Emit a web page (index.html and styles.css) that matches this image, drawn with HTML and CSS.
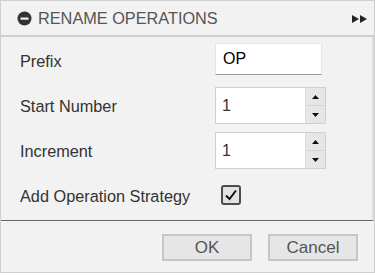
FILE: index.html
```html
<!DOCTYPE html>
<html lang="en">
	<head>
		<meta charset="UTF-8" />
		<meta name="viewport" content="width=device-width, initial-scale=1.0" />
		<title>Rename Operations</title>
		<link rel="stylesheet" href="styles.css">
	</head>
	<body>
		<div class="dialog">
			<div class="titlebar">
				<svg class="collapse" width="15" height="15" viewBox="0 0 15 15">
					<circle cx="7.5" cy="7.5" r="7" fill="#333" />
					<rect x="3.5" y="6.5" width="8" height="2.2" fill="#f2f2f2" />
				</svg>
				<h1>RENAME OPERATIONS</h1>
				<svg class="expand" width="16" height="8" viewBox="0 0 16 8">
					<path d="M0 0 L7 4 L0 8 Z M8 0 L15 4 L8 8 Z" fill="#222" />
				</svg>
			</div>
			<div class="content">
				<div class="row">
					<label>Prefix</label>
					<input class="text" type="text" value="OP">
				</div>
				<div class="row">
					<label>Start Number</label>
					<div class="spinner">
						<input type="text" value="1">
						<div class="arrows">
							<button><svg width="7" height="4" viewBox="0 0 7 4"><path d="M0 4 L3.5 0 L7 4 Z" fill="#111" /></svg></button>
							<button><svg width="7" height="4" viewBox="0 0 7 4"><path d="M0 0 L3.5 4 L7 0 Z" fill="#111" /></svg></button>
						</div>
					</div>
				</div>
				<div class="row">
					<label>Increment</label>
					<div class="spinner">
						<input type="text" value="1">
						<div class="arrows">
							<button><svg width="7" height="4" viewBox="0 0 7 4"><path d="M0 4 L3.5 0 L7 4 Z" fill="#111" /></svg></button>
							<button><svg width="7" height="4" viewBox="0 0 7 4"><path d="M0 0 L3.5 4 L7 0 Z" fill="#111" /></svg></button>
						</div>
					</div>
				</div>
				<div class="row">
					<label>Add Operation Strategy</label>
					<span class="check">
						<svg width="14" height="14" viewBox="0 0 14 14">
							<path d="M2 7.5 L5.5 11 L12 2.5" fill="none" stroke="#111" stroke-width="2" />
						</svg>
					</span>
				</div>
			</div>
			<div class="footer">
				<button>OK</button>
				<button>Cancel</button>
			</div>
		</div>
	</body>
</html>
```

FILE: styles.css
```css
* {
	margin: 0;
	padding: 0;
	box-sizing: border-box;
}
body {
	background-color: #fff;
	font-family: "Liberation Sans", Arial, sans-serif;
	color: #333;
}
.dialog {
	width: 375px;
	height: 273px;
	border: 1px solid #cfcfcf;
	background-color: #f2f2f2;
	display: flex;
	flex-direction: column;

	.titlebar {
		height: 36px;
		display: flex;
		align-items: center;
		padding: 1px 6px 0 16px;
		border-bottom: 2px solid #cfcfcf;

		.collapse {
			margin-right: 6px;
		}
		h1 {
			flex: 1;
			font-size: 16.3px;
			font-weight: normal;
			color: #555;
		}
	}
	.content {
		padding: 1px 0 2px 19px;
		border-right: 2px solid #dcdcdc;
		border-bottom: 1px solid #666;

		.row {
			height: 45px;
			display: flex;
			align-items: center;

			label {
				width: 195px;
				font-size: 16.3px;
				color: #333;
				padding-top: 2px;
			}
		}
		.text {
			width: 107px;
			height: 32px;
			margin-top: -4px;
			border: 1px solid #e6e6e6;
			border-bottom: 1px solid #999;
			background-color: #fff;
			padding-left: 7px;
			font-family: "Liberation Sans", Arial, sans-serif;
			font-size: 16px;
			color: #000;
			outline: none;
		}
		.spinner {
			display: flex;
			width: 111px;
			height: 37px;
			border: 1px solid #cfcfcf;

			input {
				width: 89px;
				border: none;
				background-color: #fff;
				padding-left: 6px;
				font-family: "Liberation Sans", Arial, sans-serif;
				font-size: 16px;
				color: #333;
				outline: none;
			}
			.arrows {
				flex: 1;
				display: flex;
				flex-direction: column;
				border-left: 1px solid #ddd;

				button {
					flex: 1;
					display: grid;
					place-items: center;
					border: none;
					background-color: #e6e6e6;
				}
				button + button {
					border-top: 1px solid #d4d4d4;
				}
			}
		}
		.check {
			margin-left: 6px;
			margin-top: -2px;
			width: 20px;
			height: 20px;
			border: 2px solid #4d4d4d;
			border-radius: 3px;
			background-color: #e2e2e2;
			display: grid;
			place-items: center;
		}
	}
	.footer {
		flex: 1;
		display: flex;
		justify-content: flex-end;
		align-items: flex-start;
		gap: 16px;
		padding: 13px 16px 0 0;

		button {
			width: 90px;
			height: 27px;
			border: 2px solid #c6c6c6;
			background-color: #e6e6e6;
			font-family: "Liberation Sans", Arial, sans-serif;
			font-size: 17px;
			color: #555;
		}
	}
}
```
